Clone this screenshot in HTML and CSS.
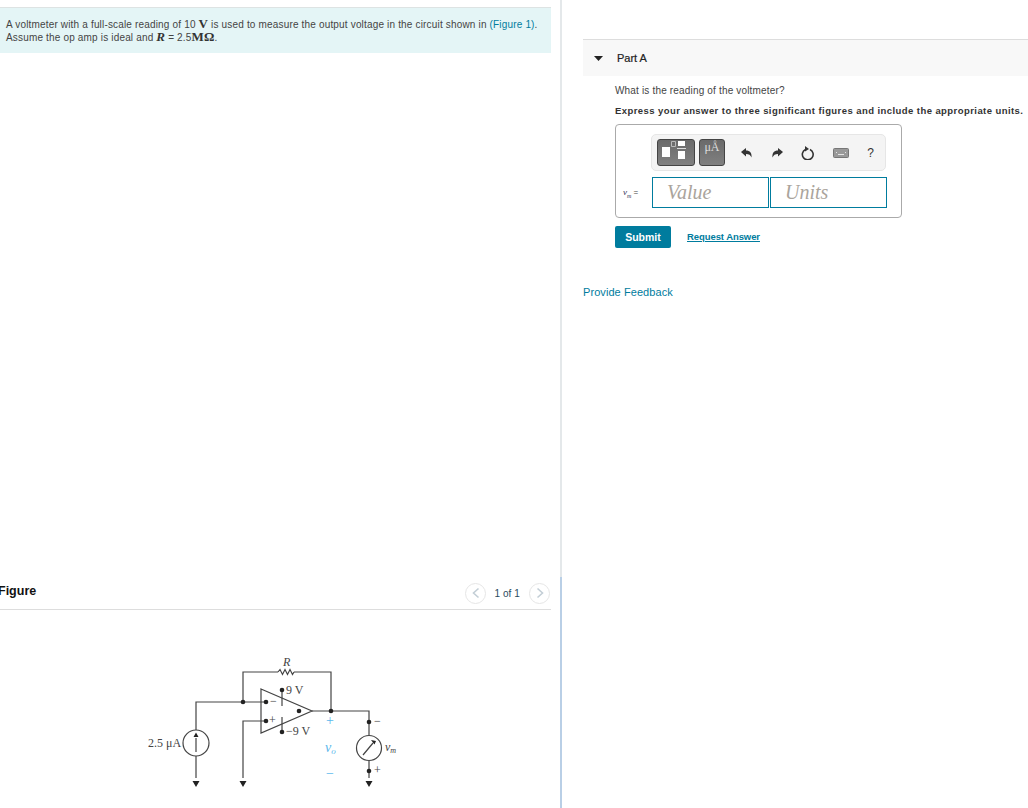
FILE: index.html
```html
<!DOCTYPE html>
<html lang="en">
<head>
<meta charset="utf-8">
<title>Part A</title>
<link rel="stylesheet" href="styles.css">
</head>
<body>
<div class="page">
  <div class="left">
    <section class="problem">
      <p class="intro">A voltmeter with a full-scale reading of 10 <b class="m">V</b> is used to measure the output voltage in the circuit shown in <a href="#">(Figure 1)</a>.<br>Assume the op amp is ideal and <b class="mi">R</b> = 2.5<b class="m">MΩ</b>.</p>
    </section>
    <section class="figure">
      <div class="figure-head">
        <h2>Figure</h2>
        <div class="pager">
          <span class="round"><svg width="10" height="12" viewBox="0 0 10 12"><path d="M7.5 1.5 2.5 6l5 4.5" fill="none" stroke="#c3ced6" stroke-width="1.6"/></svg></span>
          <span class="count">1 of 1</span>
          <span class="round"><svg width="10" height="12" viewBox="0 0 10 12"><path d="M2.5 1.5 7.5 6l-5 4.5" fill="none" stroke="#c3ced6" stroke-width="1.6"/></svg></span>
        </div>
      </div>
      <svg class="circuit" width="551" height="198" viewBox="0 610 551 198">
        <g fill="none" stroke="#444" stroke-width="1.2">
          <path d="M243 702V672H278M294 672H331V711"/>
          <path d="M278 672l2-2.5 2.5 5 2.5-5 2.5 5 2.5-5 2.5 5 1.500-2.500"/>
          <path d="M196 730V702H266M196 756V778"/>
          <path d="M266 721H243V778"/>
          <path d="M261 689 312 711 261 733Z"/>
          <path d="M312 711H369V735.500M369 761V778"/>
          <path d="M282 690V706M282 717V732"/>
          <circle cx="196" cy="743" r="13"/>
          <circle cx="369" cy="748" r="12.500"/>
          <path d="M196 752V738M363 755 373 743"/>
        </g>
        <g fill="#222">
          <circle cx="243" cy="702" r="2.300"/><circle cx="266" cy="702" r="2.300"/><circle cx="266" cy="721" r="2.300"/>
          <circle cx="299" cy="711" r="2.300"/><circle cx="331" cy="711" r="2.300"/><circle cx="369" cy="722" r="2.300"/>
          <circle cx="369" cy="771" r="2.300"/><circle cx="282" cy="690" r="2.300"/><circle cx="282" cy="732" r="2.300"/>
          <path d="M193.500 737 196 732.500 198.500 737ZM371 740 376 741 374.500 744.500Z"/>
          <path d="M192.500 781H199.500L196 787ZM239.500 781H246.500L243 787ZM365.500 781H372.500L369 787Z"/>
        </g>
        <g class="ckt">
          <text x="283" y="666" class="it">R</text>
          <text x="286" y="694">9 V</text>
          <text x="286" y="735">−9 V</text>
          <text x="148" y="747">2.5 μA</text>
          <text x="270" y="705">−</text>
          <text x="269" y="724">+</text>
          <text x="374" y="725">−</text>
          <text x="374" y="774">+</text>
          <text x="385" y="751" class="it">v<tspan class="sub" dy="2">m</tspan></text>
        </g>
        <g class="ckt blue">
          <text x="326" y="725">+</text>
          <text x="325" y="752" class="it">v<tspan class="sub" dy="2">o</tspan></text>
          <text x="326" y="778">−</text>
        </g>
      </svg>
    </section>
  </div>
  <main class="right">
    <div class="part-head">
      <svg class="caret" width="9" height="5" viewBox="0 0 9 5"><path d="M0 0H9L4.500 5Z" fill="#222"/></svg>
      <h3>Part A</h3>
    </div>
    <div class="part-body">
      <p class="q">What is the reading of the voltmeter?</p>
      <p class="express">Express your answer to three significant figures and include the appropriate units.</p>
      <div class="answer">
        <div class="toolbar">
          <span class="tbtn tbtn-a">
            <svg width="30" height="24" viewBox="0 0 30 24"><path fill="#fff" d="M1 6h8v10H1zM17 0h7v5h-7zM17 10h7v8h-7z"/><path stroke="#ddd" d="M16 7.500h9"/><path fill="none" stroke="#bbb" d="M10.500.5h4v5h-4z"/></svg>
          </span>
          <span class="tbtn tbtn-b">μÅ</span>
          <span class="tools">
            <svg width="12" height="12" viewBox="0 0 12 12"><path fill="#333" d="M0 5 5 1v2.500c4 0 6 2.500 5.500 7C9.500 8 8 7 5 7v2.500Z"/></svg>
            <svg width="12" height="12" viewBox="0 0 12 12"><path fill="#333" d="M12 5 7 1v2.500c-4 0-6 2.500-5.500 7C2.500 8 4 7 7 7v2.500Z"/></svg>
            <svg width="14" height="14" viewBox="0 0 14 14"><path fill="none" stroke="#333" stroke-width="1.600" d="M4.500 3.500a5.400 5.400 0 1 0 4.500 0"/><path fill="#333" d="M4 0 8 3 4 5.500Z"/></svg>
            <svg width="16" height="10" viewBox="0 0 16 10"><rect x=".5" y=".5" width="15" height="9" rx="1" fill="#999" stroke="#777"/><path stroke="#e4e4e4" d="M3 4.500h1M12 4.500h1M5 6.500h6"/></svg>
            <span class="help">?</span>
          </span>
        </div>
        <div class="row">
          <span class="var"><i>v<sub>m</sub></i> =</span>
          <span class="field">Value</span>
          <span class="field">Units</span>
        </div>
      </div>
      <div class="actions">
        <button class="submit">Submit</button>
        <a class="req" href="#">Request Answer</a>
      </div>
    </div>
    <a class="feedback" href="#">Provide Feedback</a>
  </main>
</div>
</body>
</html>
```

FILE: styles.css
```css
* { box-sizing: border-box; }
html, body { margin: 0; height: 100%; overflow: hidden; background: #fff; }
body { font-family: "Liberation Sans", Arial, sans-serif; color: #444; }
a { color: #007c9e; text-decoration: none; }
p, h2, h3 { margin: 0; }
.page { display: flex; height: 808px; }
.left { width: 562px; flex: none; display: flex; flex-direction: column; }
.problem { flex: 1; padding-top: 7px; border-right: 2px solid #e4e8ea; }
.intro { width: 551px; height: 46px; border-top: 1px solid #dde3e3; background: #e4f5f6; padding: 10px 0 0 6px; font-size: 10px; line-height: 13px; letter-spacing: .17px; color: #444; }
.m { font-family: "Liberation Serif", serif; font-size: 13px; line-height: 0; color: #333; }
.mi { font-family: "Liberation Serif", serif; font-size: 13px; line-height: 0; font-style: italic; color: #333; }
.figure { height: 231px; border-right: 2px solid #b9cfe6; }
.figure-head { width: 551px; height: 33px; display: flex; align-items: center; justify-content: space-between; border-bottom: 1px solid #ddd; }
h2 { font-size: 12.5px; font-weight: 700; color: #111; margin: 0 0 5px -2px; }
.pager { display: flex; align-items: center; gap: 8px; margin-right: 1px; }
.round { width: 21px; height: 21px; border: 1.500px solid #e6e6e6; border-radius: 50%; display: flex; align-items: center; justify-content: center; }
.count { font-size: 10px; color: #2b4a5e; letter-spacing: .1px; margin-right: 1px; }
.circuit { display: block; }
.ckt text { font-family: "Liberation Serif", serif; font-size: 12px; fill: #444; }
.ckt .it { font-style: italic; }
.ckt .sub { font-size: 8px; }
.ckt.blue text { font-size: 14px; fill: #5bb8ec; }
.ckt.blue .sub { font-size: 9px; }
.right { flex: 1; min-width: 0; padding: 39px 0 0 21px; }
.part-head { height: 37px; background: #f8f8f8; border-top: 1px solid #ddd; display: flex; align-items: center; gap: 14px; padding-left: 11px; }
h3 { font-size: 11px; font-weight: 400; color: #222; -webkit-text-stroke: .2px #222; }
.part-body { padding: 9px 0 0 32px; }
.q { font-size: 10px; line-height: 12px; letter-spacing: .17px; color: #444; }
.express { font-size: 9.500px; line-height: 12px; margin-top: 8px; font-weight: 700; letter-spacing: .43px; color: #333; white-space: nowrap; }
.answer { width: 287px; height: 94px; margin-top: 7px; border: 1px solid #aaa; border-radius: 4px; padding: 9px 0 0 35px; }
.toolbar { width: 235px; height: 37px; background: #f4f4f4; border: 1px solid #e6e6e6; border-radius: 5px; display: flex; align-items: center; padding: 0 0 0 5px; gap: 4px; }
.tbtn { height: 27px; border-radius: 3px; background: linear-gradient(#6a6a6a, #808080); border: 1px solid #444; display: flex; align-items: center; justify-content: center; color: #ddd; }
.tbtn-a { width: 38px; }
.tbtn-b { width: 26px; font-family: "Liberation Serif", serif; font-size: 12px; align-items: flex-start; }
.tools { flex: 1; display: flex; align-items: center; justify-content: space-between; padding: 0 11px 0 12px; }
.help { font-size: 12px; color: #333; }
.row { display: flex; align-items: center; margin: 6px 0 0 -28px; }
.var { width: 29px; font-size: 8px; color: #444; white-space: nowrap; }
.var i { font-family: "Liberation Serif", serif; font-size: 9px; color: #335; }
.var sub { font-size: 6px; }
.field { width: 117px; height: 31px; border: 1px solid #007c9e; font-family: "Liberation Serif", serif; font-style: italic; font-size: 20px; color: #aaa49c; padding: 3px 0 0 14px; margin-right: 1px; }
.actions { display: flex; align-items: center; margin-top: 8px; gap: 16px; }
.submit { width: 56px; height: 22px; background: #007c9e; border: 0; border-radius: 2px; color: #fff; font: 700 10.500px "Liberation Sans", Arial, sans-serif; padding: 0; }
.req { font-size: 9.500px; font-weight: 700; text-decoration: underline; letter-spacing: -.08px; margin-bottom: 2px; }
.feedback { display: block; margin-top: 38px; font-size: 11px; letter-spacing: .07px; }
```
